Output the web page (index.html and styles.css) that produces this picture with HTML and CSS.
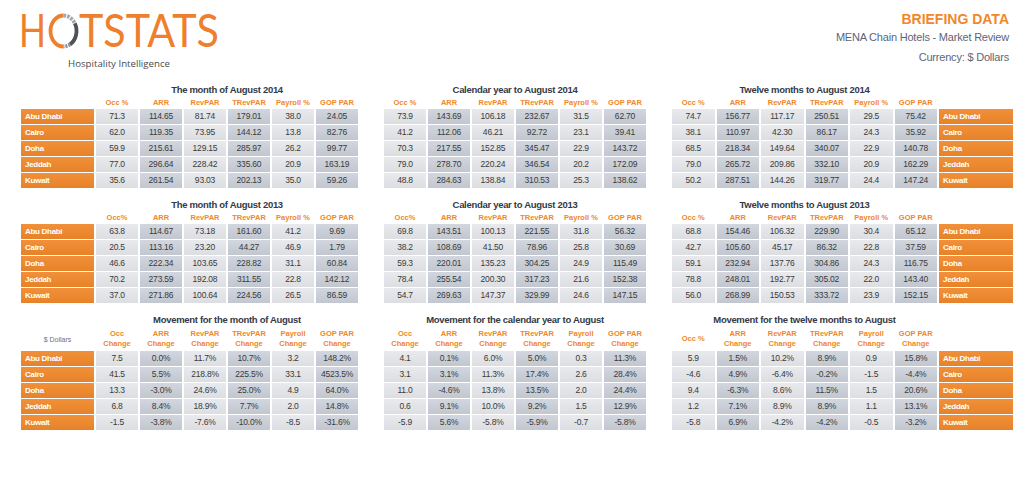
FILE: index.html
```html
<!DOCTYPE html>
<html lang="en">
<head>
<meta charset="utf-8">
<title>HotStats Briefing Data</title>
<link rel="stylesheet" href="styles.css">
</head>
<body>
<div class="page">
  <header class="top">
    <svg class="logo" width="224" height="72" viewBox="0 0 224 72" aria-label="HotStats Hospitality Intelligence">
      <text class="logo-word" x="1" y="47" textLength="27" lengthAdjust="spacingAndGlyphs">H</text>
      <path d="M45.5 46.5 A13 15.5 0 0 1 45.5 15.5" fill="none" stroke="#ee7f2d" stroke-width="3.8"/>
      <path d="M45.5 15.5 A13 15.5 0 0 1 56.76 23.25" fill="none" stroke="#a3a5ac" stroke-width="3.8" stroke-dasharray="2.6 1.1"/>
      <path d="M56.76 23.25 A13 15.5 0 0 1 52 44.42" fill="none" stroke="#4f5159" stroke-width="3.8"/>
      <path d="M52 44.42 A13 15.5 0 0 1 45.5 46.5" fill="none" stroke="#8d8f97" stroke-width="3.8" stroke-dasharray="2 1"/>
      <text class="logo-word" x="61" y="47" textLength="140" lengthAdjust="spacingAndGlyphs">TSTATS</text>
      <text class="logo-sub" x="50" y="66.5" textLength="102" lengthAdjust="spacingAndGlyphs">Hospitality Intelligence</text>
    </svg>
    <div class="brief">
      <div class="brief-title">BRIEFING DATA</div>
      <div class="brief-line">MENA Chain Hotels - Market Review</div>
      <div class="brief-line">Currency: $ Dollars</div>
    </div>
  </header>

  <!-- Band 1 : 2014 -->
  <section class="band">
    <div class="tbl tbl-a">
      <div class="title">The month of August 2014</div>
      <div class="corner"></div>
      <div class="hd">Occ %</div><div class="hd">ARR</div><div class="hd">RevPAR</div><div class="hd">TRevPAR</div><div class="hd">Payroll %</div><div class="hd">GOP PAR</div>
      <div class="lbl">Abu Dhabi</div><div class="c">71.3</div><div class="c d">114.65</div><div class="c">81.74</div><div class="c d">179.01</div><div class="c">38.0</div><div class="c d">24.05</div>
      <div class="lbl">Cairo</div><div class="c">62.0</div><div class="c d">119.35</div><div class="c">73.95</div><div class="c d">144.12</div><div class="c">13.8</div><div class="c d">82.76</div>
      <div class="lbl">Doha</div><div class="c">59.9</div><div class="c d">215.61</div><div class="c">129.15</div><div class="c d">285.97</div><div class="c">26.2</div><div class="c d">99.77</div>
      <div class="lbl">Jeddah</div><div class="c">77.0</div><div class="c d">296.64</div><div class="c">228.42</div><div class="c d">335.60</div><div class="c">20.9</div><div class="c d">163.19</div>
      <div class="lbl">Kuwait</div><div class="c">35.6</div><div class="c d">261.54</div><div class="c">93.03</div><div class="c d">202.13</div><div class="c">35.0</div><div class="c d">59.26</div>
    </div>
    <div class="tbl tbl-b">
      <div class="title">Calendar year to August 2014</div>
      <div class="hd">Occ %</div><div class="hd">ARR</div><div class="hd">RevPAR</div><div class="hd">TRevPAR</div><div class="hd">Payroll %</div><div class="hd">GOP PAR</div>
      <div class="c">73.9</div><div class="c d">143.69</div><div class="c">106.18</div><div class="c d">232.67</div><div class="c">31.5</div><div class="c d">62.70</div>
      <div class="c">41.2</div><div class="c d">112.06</div><div class="c">46.21</div><div class="c d">92.72</div><div class="c">23.1</div><div class="c d">39.41</div>
      <div class="c">70.3</div><div class="c d">217.55</div><div class="c">152.85</div><div class="c d">345.47</div><div class="c">22.9</div><div class="c d">143.72</div>
      <div class="c">79.0</div><div class="c d">278.70</div><div class="c">220.24</div><div class="c d">346.54</div><div class="c">20.2</div><div class="c d">172.09</div>
      <div class="c">48.8</div><div class="c d">284.63</div><div class="c">138.84</div><div class="c d">310.53</div><div class="c">25.3</div><div class="c d">138.62</div>
    </div>
    <div class="tbl tbl-c">
      <div class="title">Twelve months to August 2014</div>
      <div class="hd">Occ %</div><div class="hd">ARR</div><div class="hd">RevPAR</div><div class="hd">TRevPAR</div><div class="hd">Payroll %</div><div class="hd">GOP PAR</div><div class="corner"></div>
      <div class="c">74.7</div><div class="c d">156.77</div><div class="c">117.17</div><div class="c d">250.51</div><div class="c">29.5</div><div class="c d">75.42</div><div class="lbl">Abu Dhabi</div>
      <div class="c">38.1</div><div class="c d">110.97</div><div class="c">42.30</div><div class="c d">86.17</div><div class="c">24.3</div><div class="c d">35.92</div><div class="lbl">Cairo</div>
      <div class="c">68.5</div><div class="c d">218.34</div><div class="c">149.64</div><div class="c d">340.07</div><div class="c">22.9</div><div class="c d">140.78</div><div class="lbl">Doha</div>
      <div class="c">79.0</div><div class="c d">265.72</div><div class="c">209.86</div><div class="c d">332.10</div><div class="c">20.9</div><div class="c d">162.29</div><div class="lbl">Jeddah</div>
      <div class="c">50.2</div><div class="c d">287.51</div><div class="c">144.26</div><div class="c d">319.77</div><div class="c">24.4</div><div class="c d">147.24</div><div class="lbl">Kuwait</div>
    </div>
  </section>

  <!-- Band 2 : 2013 -->
  <section class="band">
    <div class="tbl tbl-a">
      <div class="title">The month of August 2013</div>
      <div class="corner"></div>
      <div class="hd">Occ%</div><div class="hd">ARR</div><div class="hd">RevPAR</div><div class="hd">TRevPAR</div><div class="hd">Payroll %</div><div class="hd">GOP PAR</div>
      <div class="lbl">Abu Dhabi</div><div class="c">63.8</div><div class="c d">114.67</div><div class="c">73.18</div><div class="c d">161.60</div><div class="c">41.2</div><div class="c d">9.69</div>
      <div class="lbl">Cairo</div><div class="c">20.5</div><div class="c d">113.16</div><div class="c">23.20</div><div class="c d">44.27</div><div class="c">46.9</div><div class="c d">1.79</div>
      <div class="lbl">Doha</div><div class="c">46.6</div><div class="c d">222.34</div><div class="c">103.65</div><div class="c d">228.82</div><div class="c">31.1</div><div class="c d">60.84</div>
      <div class="lbl">Jeddah</div><div class="c">70.2</div><div class="c d">273.59</div><div class="c">192.08</div><div class="c d">311.55</div><div class="c">22.8</div><div class="c d">142.12</div>
      <div class="lbl">Kuwait</div><div class="c">37.0</div><div class="c d">271.86</div><div class="c">100.64</div><div class="c d">224.56</div><div class="c">26.5</div><div class="c d">86.59</div>
    </div>
    <div class="tbl tbl-b">
      <div class="title">Calendar year to August 2013</div>
      <div class="hd">Occ%</div><div class="hd">ARR</div><div class="hd">RevPAR</div><div class="hd">TRevPAR</div><div class="hd">Payroll %</div><div class="hd">GOP PAR</div>
      <div class="c">69.8</div><div class="c d">143.51</div><div class="c">100.13</div><div class="c d">221.55</div><div class="c">31.8</div><div class="c d">56.32</div>
      <div class="c">38.2</div><div class="c d">108.69</div><div class="c">41.50</div><div class="c d">78.96</div><div class="c">25.8</div><div class="c d">30.69</div>
      <div class="c">59.3</div><div class="c d">220.01</div><div class="c">135.23</div><div class="c d">304.25</div><div class="c">24.9</div><div class="c d">115.49</div>
      <div class="c">78.4</div><div class="c d">255.54</div><div class="c">200.30</div><div class="c d">317.23</div><div class="c">21.6</div><div class="c d">152.38</div>
      <div class="c">54.7</div><div class="c d">269.63</div><div class="c">147.37</div><div class="c d">329.99</div><div class="c">24.6</div><div class="c d">147.15</div>
    </div>
    <div class="tbl tbl-c">
      <div class="title">Twelve months to August 2013</div>
      <div class="hd">Occ %</div><div class="hd">ARR</div><div class="hd">RevPAR</div><div class="hd">TRevPAR</div><div class="hd">Payroll %</div><div class="hd">GOP PAR</div><div class="corner"></div>
      <div class="c">68.8</div><div class="c d">154.46</div><div class="c">106.32</div><div class="c d">229.90</div><div class="c">30.4</div><div class="c d">65.12</div><div class="lbl">Abu Dhabi</div>
      <div class="c">42.7</div><div class="c d">105.60</div><div class="c">45.17</div><div class="c d">86.32</div><div class="c">22.8</div><div class="c d">37.59</div><div class="lbl">Cairo</div>
      <div class="c">59.1</div><div class="c d">232.94</div><div class="c">137.76</div><div class="c d">304.86</div><div class="c">24.3</div><div class="c d">116.75</div><div class="lbl">Doha</div>
      <div class="c">78.8</div><div class="c d">248.01</div><div class="c">192.77</div><div class="c d">305.02</div><div class="c">22.0</div><div class="c d">143.40</div><div class="lbl">Jeddah</div>
      <div class="c">56.0</div><div class="c d">268.99</div><div class="c">150.53</div><div class="c d">333.72</div><div class="c">23.9</div><div class="c d">152.15</div><div class="lbl">Kuwait</div>
    </div>
  </section>

  <!-- Band 3 : movement -->
  <section class="band band-move">
    <div class="tbl tbl-a">
      <div class="title">Movement for the month of August</div>
      <div class="corner">$ Dollars</div>
      <div class="hd">Occ<br>Change</div><div class="hd">ARR<br>Change</div><div class="hd">RevPAR<br>Change</div><div class="hd">TRevPAR<br>Change</div><div class="hd">Payroll<br>Change</div><div class="hd">GOP PAR<br>Change</div>
      <div class="lbl">Abu Dhabi</div><div class="c">7.5</div><div class="c d">0.0%</div><div class="c">11.7%</div><div class="c d">10.7%</div><div class="c">3.2</div><div class="c d">148.2%</div>
      <div class="lbl">Cairo</div><div class="c">41.5</div><div class="c d">5.5%</div><div class="c">218.8%</div><div class="c d">225.5%</div><div class="c">33.1</div><div class="c d">4523.5%</div>
      <div class="lbl">Doha</div><div class="c">13.3</div><div class="c d">-3.0%</div><div class="c">24.6%</div><div class="c d">25.0%</div><div class="c">4.9</div><div class="c d">64.0%</div>
      <div class="lbl">Jeddah</div><div class="c">6.8</div><div class="c d">8.4%</div><div class="c">18.9%</div><div class="c d">7.7%</div><div class="c">2.0</div><div class="c d">14.8%</div>
      <div class="lbl">Kuwait</div><div class="c">-1.5</div><div class="c d">-3.8%</div><div class="c">-7.6%</div><div class="c d">-10.0%</div><div class="c">-8.5</div><div class="c d">-31.6%</div>
    </div>
    <div class="tbl tbl-b">
      <div class="title">Movement for the calendar year to August</div>
      <div class="hd">Occ<br>Change</div><div class="hd">ARR<br>Change</div><div class="hd">RevPAR<br>Change</div><div class="hd">TRevPAR<br>Change</div><div class="hd">Payroll<br>Change</div><div class="hd">GOP PAR<br>Change</div>
      <div class="c">4.1</div><div class="c d">0.1%</div><div class="c">6.0%</div><div class="c d">5.0%</div><div class="c">0.3</div><div class="c d">11.3%</div>
      <div class="c">3.1</div><div class="c d">3.1%</div><div class="c">11.3%</div><div class="c d">17.4%</div><div class="c">2.6</div><div class="c d">28.4%</div>
      <div class="c">11.0</div><div class="c d">-4.6%</div><div class="c">13.8%</div><div class="c d">13.5%</div><div class="c">2.0</div><div class="c d">24.4%</div>
      <div class="c">0.6</div><div class="c d">9.1%</div><div class="c">10.0%</div><div class="c d">9.2%</div><div class="c">1.5</div><div class="c d">12.9%</div>
      <div class="c">-5.9</div><div class="c d">5.6%</div><div class="c">-5.8%</div><div class="c d">-5.9%</div><div class="c">-0.7</div><div class="c d">-5.8%</div>
    </div>
    <div class="tbl tbl-c">
      <div class="title">Movement for the twelve months to August</div>
      <div class="hd">Occ %</div><div class="hd">ARR<br>Change</div><div class="hd">RevPAR<br>Change</div><div class="hd">TRevPAR<br>Change</div><div class="hd">Payroll<br>Change</div><div class="hd">GOP PAR<br>Change</div><div class="corner"></div>
      <div class="c">5.9</div><div class="c d">1.5%</div><div class="c">10.2%</div><div class="c d">8.9%</div><div class="c">0.9</div><div class="c d">15.8%</div><div class="lbl">Abu Dhabi</div>
      <div class="c">-4.6</div><div class="c d">4.9%</div><div class="c">-6.4%</div><div class="c d">-0.2%</div><div class="c">-1.5</div><div class="c d">-4.4%</div><div class="lbl">Cairo</div>
      <div class="c">9.4</div><div class="c d">-6.3%</div><div class="c">8.6%</div><div class="c d">11.5%</div><div class="c">1.5</div><div class="c d">20.6%</div><div class="lbl">Doha</div>
      <div class="c">1.2</div><div class="c d">7.1%</div><div class="c">8.9%</div><div class="c d">8.9%</div><div class="c">1.1</div><div class="c d">13.1%</div><div class="lbl">Jeddah</div>
      <div class="c">-5.8</div><div class="c d">6.9%</div><div class="c">-4.2%</div><div class="c d">-4.2%</div><div class="c">-0.5</div><div class="c d">-3.2%</div><div class="lbl">Kuwait</div>
    </div>
  </section>
</div>
</body>
</html>
```

FILE: styles.css
```css
* { box-sizing: border-box; }

body {
  margin: 0;
  background: #ffffff;
  font-family: "Liberation Sans", Arial, sans-serif;
}

.page {
  width: 1024px;
  height: 498px;
  padding: 0 11px 0 21px;
  overflow: hidden;
}

/* ---------- header ---------- */
.top {
  display: flex;
  justify-content: space-between;
  align-items: flex-start;
  height: 83px;
}

.logo {
  display: block;
  margin-left: -3px;
}

.logo-word {
  font-family: Lato, "Open Sans", sans-serif;
  font-weight: 400;
  font-size: 47px;
  fill: #ee7f2d;
}

.logo-sub {
  font-family: "Open Sans", Lato, sans-serif;
  font-size: 9.5px;
  fill: #4a4a4c;
}

.brief {
  text-align: right;
  padding-top: 11px;
  padding-right: 4px;
}

.brief-title {
  font-weight: bold;
  font-size: 14px;
  line-height: 16px;
  color: #f0872a;
}

.brief-line {
  font-size: 11px;
  line-height: 20px;
  letter-spacing: -0.2px;
  color: #5d6577;
}

/* ---------- bands of tables ---------- */
.band {
  display: flex;
  justify-content: space-between;
}

.band + .band { margin-top: 10px; }

.tbl {
  display: grid;
  row-gap: 1px;
  column-gap: 2px;
  grid-template-rows: 14px 10px repeat(5, 15px);
}

.band-move .tbl { grid-template-rows: 14px 22px repeat(5, 15px); }

.tbl-a { grid-template-columns: 73px repeat(6, 42px); }
.tbl-b { grid-template-columns: repeat(6, 42px); }
.tbl-c { grid-template-columns: repeat(6, 42.5px) 74px; }

.tbl-a .title { grid-column: 2 / -1; }
.tbl-b .title { grid-column: 1 / -1; }
.tbl-c .title { grid-column: 1 / -1; padding-right: 76px; }

.title {
  text-align: center;
  font-weight: bold;
  font-size: 9.5px;
  line-height: 14px;
  letter-spacing: -0.3px;
  color: #333a46;
  white-space: nowrap;
}

.hd {
  display: flex;
  align-items: center;
  justify-content: center;
  text-align: center;
  font-weight: bold;
  font-size: 7.5px;
  line-height: 10px;
  color: #f0872a;
  white-space: nowrap;
}

.band-move .hd { line-height: 10.5px; }

.corner {
  display: flex;
  align-items: center;
  justify-content: center;
  font-size: 7px;
  color: #66718a;
}

.lbl {
  background: #f0872a linear-gradient(to bottom, rgba(255,255,255,0.08), rgba(0,0,0,0.04));
  color: #ffffff;
  font-weight: bold;
  font-size: 8px;
  line-height: 15px;
  letter-spacing: -0.3px;
  padding-left: 4px;
  white-space: nowrap;
}

.c {
  background: #e3e5e9 linear-gradient(to bottom, rgba(255,255,255,0.18), rgba(0,0,0,0.03));
  text-align: center;
  font-size: 8.5px;
  line-height: 15px;
  letter-spacing: -0.2px;
  color: #3a3a3a;
  white-space: nowrap;
}

.c.d { background-color: #c8cdd6; }
```
